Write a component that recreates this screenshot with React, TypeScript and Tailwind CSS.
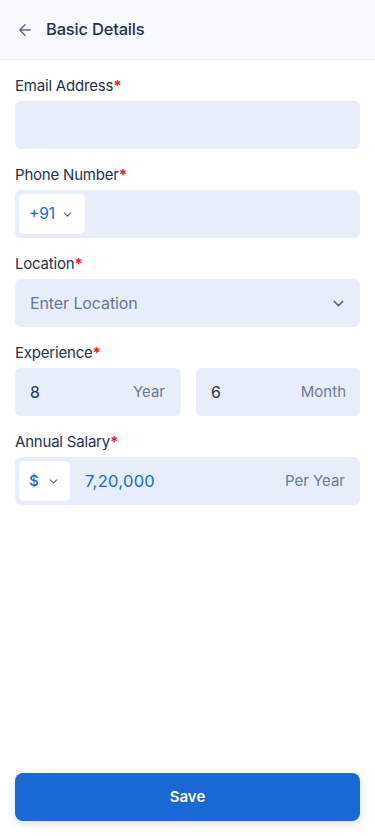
import React from "react";

const Chevron = ({ className = "" }: { className?: string }) => (
  <svg viewBox="0 0 24 24" className={className} fill="none" stroke="currentColor" strokeWidth={2} strokeLinecap="round" strokeLinejoin="round">
    <path d="M6 9l6 6 6-6" />
  </svg>
);

const Label = ({ children }: { children: React.ReactNode }) => (
  <div className="text-[15px] leading-5 font-normal text-[#25324a] tracking-[-0.2px]">
    {children}
    <span className="text-[#f5181d] font-bold">*</span>
  </div>
);

export default function App() {
  return (
    <div className="min-h-[836px] w-[375px] bg-white flex flex-col" style={{ fontFamily: "Inter, 'Noto Sans', sans-serif" }}>
      <div className="h-[59px] bg-[#f8faff] border-b border-[#e6ebf3] flex items-center pl-[16px] gap-[12px] box-content">
        <svg viewBox="0 0 24 24" className="w-[18px] h-[18px] text-[#5a6a8e]" fill="none" stroke="currentColor" strokeWidth={2} strokeLinecap="round" strokeLinejoin="round">
          <path d="M19 12H5M12 19l-7-7 7-7" />
        </svg>
        <div className="text-[16.5px] font-medium text-[#25324a] tracking-[-0.2px]">Basic Details</div>
      </div>

      <div className="flex flex-col gap-[16px] px-[15px] pt-[16px]">
        <div className="flex flex-col gap-[5px]">
          <Label>Email Address</Label>
          <div className="h-[48px] rounded-[6px] bg-[#e7eefa]" />
        </div>

        <div className="flex flex-col gap-[5px]">
          <Label>Phone Number</Label>
          <div className="h-[48px] rounded-[6px] bg-[#e7eefa] flex items-center p-[4px]">
            <div className="h-[40px] w-[66px] bg-white rounded-[5px] flex items-center pl-[10px] gap-[6px]">
              <span className="text-[15.5px] text-[#1a68d4]">+91</span>
              <Chevron className="w-[13px] h-[13px] text-[#55668a]" />
            </div>
          </div>
        </div>

        <div className="flex flex-col gap-[5px]">
          <Label>Location</Label>
          <div className="h-[48px] rounded-[6px] bg-[#e7eefa] flex items-center justify-between pl-[15px] pr-[13px]">
            <span className="text-[16px] text-[#65779b] tracking-[-0.1px]">Enter Location</span>
            <Chevron className="w-[17px] h-[17px] text-[#55668a]" />
          </div>
        </div>

        <div className="flex flex-col gap-[5px]">
          <Label>Experience</Label>
          <div className="flex gap-[15px]">
            <div className="flex-1 h-[48px] rounded-[6px] bg-[#e7eefa] flex items-center justify-between pl-[15px] pr-[16px]">
              <span className="text-[16px] text-[#25324a]">8</span>
              <span className="text-[15px] text-[#6a7a9a]">Year</span>
            </div>
            <div className="flex-1 h-[48px] rounded-[6px] bg-[#e7eefa] flex items-center justify-between pl-[15px] pr-[14px]">
              <span className="text-[16px] text-[#25324a]">6</span>
              <span className="text-[15px] text-[#6a7a9a]">Month</span>
            </div>
          </div>
        </div>

        <div className="flex flex-col gap-[5px]">
          <Label>Annual Salary</Label>
          <div className="h-[48px] rounded-[6px] bg-[#e7eefa] flex items-center p-[4px] pr-[15px]">
            <div className="h-[40px] w-[51px] bg-white rounded-[5px] flex items-center pl-[10px] gap-[8px]">
              <span className="text-[15px] font-medium text-[#1a68d4]">$</span>
              <Chevron className="w-[13px] h-[13px] text-[#55668a]" />
            </div>
            <span className="ml-[15px] text-[16.5px] text-[#1a68d4] tracking-[0.3px]">7,20,000</span>
            <span className="ml-auto text-[15px] text-[#6a7a9a]">Per Year</span>
          </div>
        </div>
      </div>

      <div className="mt-auto px-[15px] pb-[15px]">
        <button className="w-full h-[48px] rounded-[8px] bg-[#1a68d4] text-white text-[15px] font-semibold shadow-[0_3px_8px_rgba(26,104,212,0.18)]">
          Save
        </button>
      </div>
    </div>
  );
}
